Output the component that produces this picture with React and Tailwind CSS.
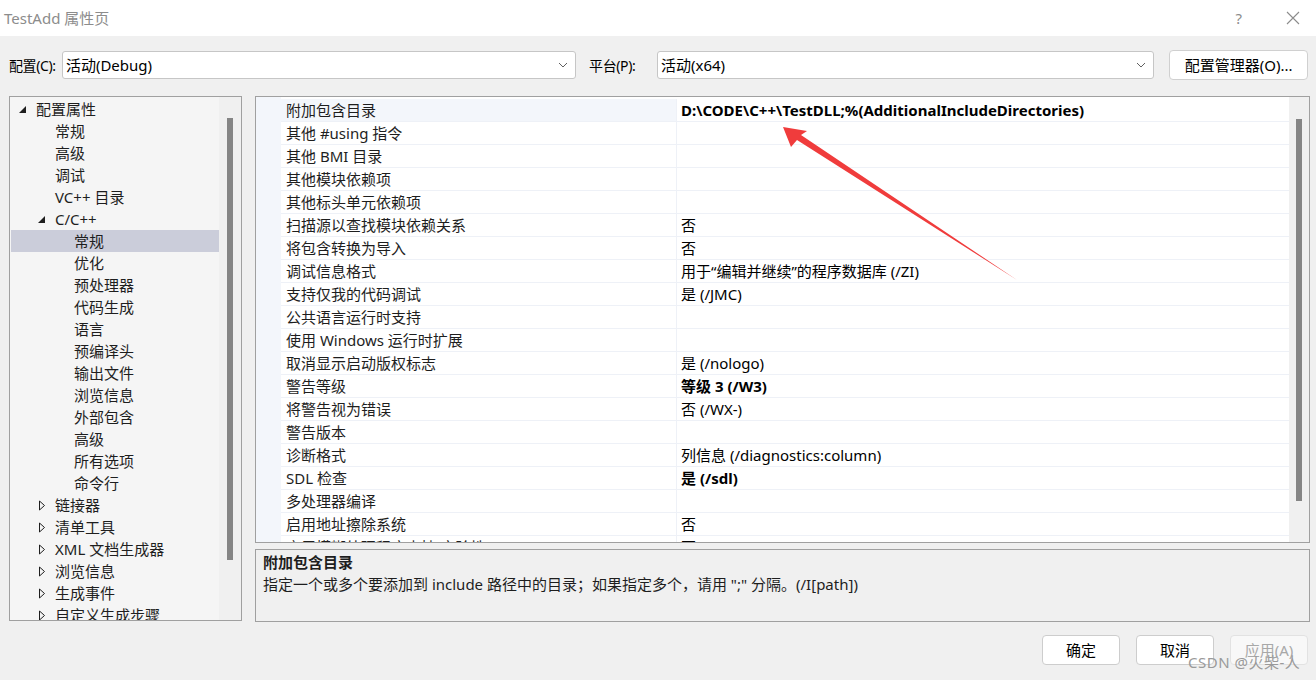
import React from 'react';

const FONT = { fontFamily: '"Noto Sans", "Noto Sans CJK SC", sans-serif' };

const treeItems = [
  { label: '配置属性', level: 0, icon: 'open' },
  { label: '常规', level: 1 },
  { label: '高级', level: 1 },
  { label: '调试', level: 1 },
  { label: 'VC++ 目录', level: 1 },
  { label: 'C/C++', level: 1, icon: 'open' },
  { label: '常规', level: 2, selected: true },
  { label: '优化', level: 2 },
  { label: '预处理器', level: 2 },
  { label: '代码生成', level: 2 },
  { label: '语言', level: 2 },
  { label: '预编译头', level: 2 },
  { label: '输出文件', level: 2 },
  { label: '浏览信息', level: 2 },
  { label: '外部包含', level: 2 },
  { label: '高级', level: 2 },
  { label: '所有选项', level: 2 },
  { label: '命令行', level: 2 },
  { label: '链接器', level: 1, icon: 'closed' },
  { label: '清单工具', level: 1, icon: 'closed' },
  { label: 'XML 文档生成器', level: 1, icon: 'closed' },
  { label: '浏览信息', level: 1, icon: 'closed' },
  { label: '生成事件', level: 1, icon: 'closed' },
  { label: '自定义生成步骤', level: 1, icon: 'closed' },
];

const props = [
  ['附加包含目录', 'D:\\CODE\\C++\\TestDLL;%(AdditionalIncludeDirectories)', true],
  ['其他 #using 指令', ''],
  ['其他 BMI 目录', ''],
  ['其他模块依赖项', ''],
  ['其他标头单元依赖项', ''],
  ['扫描源以查找模块依赖关系', '否'],
  ['将包含转换为导入', '否'],
  ['调试信息格式', '用于“编辑并继续”的程序数据库 (/ZI)'],
  ['支持仅我的代码调试', '是 (/JMC)'],
  ['公共语言运行时支持', ''],
  ['使用 Windows 运行时扩展', ''],
  ['取消显示启动版权标志', '是 (/nologo)'],
  ['警告等级', '等级 3 (/W3)', true],
  ['将警告视为错误', '否 (/WX-)'],
  ['警告版本', ''],
  ['诊断格式', '列信息 (/diagnostics:column)'],
  ['SDL 检查', '是 (/sdl)', true],
  ['多处理器编译', ''],
  ['启用地址擦除系统', '否'],
  ['启用模糊处理程序支持(实验性)', '否'],
];

const Chevron = () => (
  <svg width="10" height="6" viewBox="0 0 10 6" className="text-[#606060]">
    <path d="M1 1 L5 5 L9 1" fill="none" stroke="currentColor" strokeWidth="1" />
  </svg>
);

const TreeIcon = ({ type }) => {
  if (type === 'open') {
    return (
      <svg width="9" height="9" viewBox="0 0 9 9">
        <path d="M8 1 L8 8 L1 8 Z" fill="#1e1e1e" />
      </svg>
    );
  }
  return (
    <svg width="8" height="11" viewBox="0 0 8 11">
      <path d="M1.5 1 L6.5 5.5 L1.5 10 Z" fill="none" stroke="#1e1e1e" strokeWidth="1" />
    </svg>
  );
};

const Combo = ({ value, className }) => (
  <div className={`h-[28px] bg-white border border-[#c6c6c6] rounded-[3px] flex items-center justify-between pl-[3px] pr-[7px] ${className}`}>
    <span className="text-[15px] text-black pt-[1px]">{value}</span>
    <Chevron />
  </div>
);

const Button = ({ children, disabled }) => (
  <div className={`w-[78px] h-[30px] rounded-[4px] border flex items-center justify-center text-[15px] ${disabled ? 'border-[#e2e2e2] bg-[#f8f8f8] text-[#a8a8a8]' : 'border-[#cdcdcd] bg-white text-black'}`}>
    {children}
  </div>
);

export default function App() {
  return (
    <div className="relative w-[1316px] h-[680px] bg-[#f0f0f0] overflow-hidden flex flex-col" style={FONT}>
      {/* title bar */}
      <div className="h-[36px] bg-white flex items-center justify-between pl-[4px] pr-[16px] shrink-0">
        <span className="text-[15px] text-[#8c8c8c]">TestAdd 属性页</span>
        <div className="flex items-center gap-[44px] text-[#8c8c8c]">
          <span className="text-[15px]">?</span>
          <svg width="14" height="14" viewBox="0 0 14 14">
            <path d="M1 1 L13 13 M13 1 L1 13" stroke="#8c8c8c" strokeWidth="1.1" />
          </svg>
        </div>
      </div>

      {/* config row */}
      <div className="flex items-center h-[30px] mt-[14px] pl-[9px] pr-[8px] shrink-0">
        <span className="text-[14px] tracking-[-0.4px] w-[53px] whitespace-nowrap">配置(C):</span>
        <Combo value="活动(Debug)" className="w-[515px]" />
        <span className="text-[14px] tracking-[-0.4px] ml-[13px] w-[68px] whitespace-nowrap">平台(P):</span>
        <Combo value="活动(x64)" className="w-[498px]" />
        <div className="ml-[15px] w-[139px] h-[30px] bg-white border border-[#d0d0d0] rounded-[4px] flex items-center justify-center text-[15px]">
          配置管理器(O)...
        </div>
      </div>

      {/* main */}
      <div className="flex mt-[16px] pl-[9px] pr-[6px] gap-[13px] shrink-0">
        {/* tree */}
        <div className="w-[233px] h-[525px] border border-[#a0a0a0] bg-[#f5f5f5] flex overflow-hidden">
          <div className="flex-1 pt-[1px] overflow-hidden">
            {treeItems.map((it, i) => (
              <div key={i} className={`h-[22px] flex items-center ml-[1px] ${it.selected ? 'bg-[#cbcdda]' : ''}`}>
                <div className="w-[25px] shrink-0" style={{ marginLeft: it.level * 19 }}>
                  {it.icon && (
                    <div className="flex justify-end pr-[9px]">
                      <TreeIcon type={it.icon} />
                    </div>
                  )}
                </div>
                <span className="text-[15px] text-[#1e1e1e] whitespace-nowrap">{it.label}</span>
              </div>
            ))}
          </div>
          <div className="w-[22px] bg-[#f0f0f0] flex justify-center pt-[21px]">
            <div className="w-[6px] h-[442px] bg-[#858585]" />
          </div>
        </div>

        {/* right column */}
        <div className="flex-1 flex flex-col gap-[6px]">
          <div className="h-[447px] border border-[#a0a0a0] bg-white flex overflow-hidden">
            <div className="w-[25px] bg-[#f3f6fb] shrink-0" />
            <div className="flex-1 pt-[2px] overflow-hidden">
              {props.map(([name, value, bold], i) => (
                <div key={i} className="h-[23px] flex border-b border-[#eef1f7]">
                  <div className={`w-[396px] shrink-0 pl-[5px] flex items-center text-[15px] text-[#1e1e1e] whitespace-nowrap border-r border-[#eef1f7] ${i === 0 ? 'bg-[#f3f6fb]' : ''}`}>
                    {name}
                  </div>
                  <div className={`flex-1 pl-[4px] flex items-center text-[15px] text-black whitespace-nowrap ${bold ? 'font-bold' : ''}`}>
                    {value}
                  </div>
                </div>
              ))}
            </div>
            <div className="w-[20px] bg-[#f0f0f0] shrink-0 flex justify-center pt-[22px]">
              <div className="w-[6px] h-[382px] bg-[#858585]" />
            </div>
          </div>
          <div className="h-[73px] border border-[#a0a0a0] px-[7px] pt-[1px]">
            <div className="text-[15px] font-bold text-[#1e1e1e] leading-[22px]">附加包含目录</div>
            <div className="text-[15px] text-[#1e1e1e] leading-[22px]">
              指定一个或多个要添加到 include 路径中的目录；如果指定多个，请用 ";" 分隔。(/I[path])
            </div>
          </div>
        </div>
      </div>

      {/* buttons */}
      <div className="flex justify-end gap-[16px] pr-[8px] mt-[13px]">
        <Button>确定</Button>
        <Button>取消</Button>
        <Button disabled>应用(A)</Button>
      </div>

      {/* watermark */}
      <div className="absolute left-[1188px] top-[651px] text-[15px] text-[#9a9a9a] tracking-[0.5px]">CSDN @火柴-人</div>

      {/* annotation arrow */}
      <svg className="absolute left-0 top-0 pointer-events-none" width="1316" height="680">
        <polygon points="783,127 807,131 801,135 1017,280 797,140 791,147" fill="#f03c3c" />
      </svg>
    </div>
  );
}
